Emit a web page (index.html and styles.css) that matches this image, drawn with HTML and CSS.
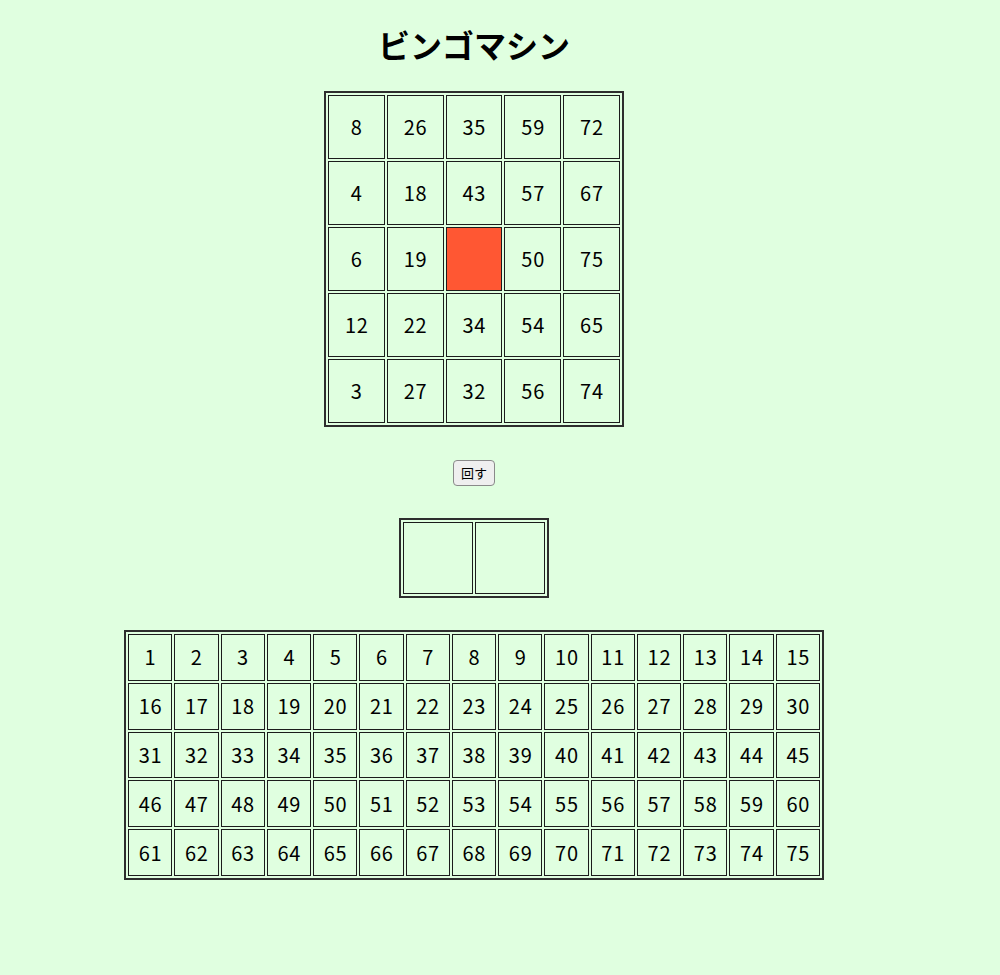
FILE: index.html
```html
<!DOCTYPE html>
<html lang="ja">
<head>
<meta charset="utf-8">
<title>ビンゴマシン</title>
<link rel="stylesheet" href="styles.css">
</head>
<body>
<div class="page">
  <h1 class="title">ビンゴマシン</h1>
  <table class="grid card">
    <tr><td>8</td><td>26</td><td>35</td><td>59</td><td>72</td></tr>
    <tr><td>4</td><td>18</td><td>43</td><td>57</td><td>67</td></tr>
    <tr><td>6</td><td>19</td><td class="hit"></td><td>50</td><td>75</td></tr>
    <tr><td>12</td><td>22</td><td>34</td><td>54</td><td>65</td></tr>
    <tr><td>3</td><td>27</td><td>32</td><td>56</td><td>74</td></tr>
  </table>
  <div class="controls"><button class="spin" type="button">回す</button></div>
  <table class="grid result">
    <tr><td></td><td></td></tr>
  </table>
  <table class="grid board">
    <tr><td>1</td><td>2</td><td>3</td><td>4</td><td>5</td><td>6</td><td>7</td><td>8</td><td>9</td><td>10</td><td>11</td><td>12</td><td>13</td><td>14</td><td>15</td></tr>
    <tr><td>16</td><td>17</td><td>18</td><td>19</td><td>20</td><td>21</td><td>22</td><td>23</td><td>24</td><td>25</td><td>26</td><td>27</td><td>28</td><td>29</td><td>30</td></tr>
    <tr><td>31</td><td>32</td><td>33</td><td>34</td><td>35</td><td>36</td><td>37</td><td>38</td><td>39</td><td>40</td><td>41</td><td>42</td><td>43</td><td>44</td><td>45</td></tr>
    <tr><td>46</td><td>47</td><td>48</td><td>49</td><td>50</td><td>51</td><td>52</td><td>53</td><td>54</td><td>55</td><td>56</td><td>57</td><td>58</td><td>59</td><td>60</td></tr>
    <tr><td>61</td><td>62</td><td>63</td><td>64</td><td>65</td><td>66</td><td>67</td><td>68</td><td>69</td><td>70</td><td>71</td><td>72</td><td>73</td><td>74</td><td>75</td></tr>
  </table>
</div>
</body>
</html>
```

FILE: styles.css
```css
html, body {
  margin: 0;
  padding: 0;
  background: #e0ffe0;
  color: #000;
  font-family: "Noto Sans CJK JP", "Noto Sans", sans-serif;
}
body {
  min-height: 975px;
}
.page {
  width: 948px;
  text-align: center;
  padding-top: 24px;
}
.title {
  margin: 0;
  font-size: 32px;
  line-height: 40px;
  font-weight: bold;
}
.grid {
  margin: 0 auto;
  border: 2px solid #2e2e2e;
  border-collapse: separate;
  border-spacing: 2px;
  table-layout: fixed;
}
.grid td {
  box-sizing: border-box;
  border: 1px solid #1c1c1c;
  padding: 0 0 0 0.75px;
  text-align: center;
  vertical-align: middle;
  font-size: 20px;
  line-height: 24px;
  letter-spacing: 0.75px;
}
.card {
  width: 300px;
  margin-top: 27px;
}
.card td {
  height: 64px;
}
.card td.hit {
  background: #ff5733;
}
.controls {
  margin-top: 32px;
  height: 26px;
}
.spin {
  box-sizing: border-box;
  height: 26px;
  width: 42px;
  padding: 0 6px;
  font-family: "Noto Sans CJK JP", sans-serif;
  font-size: 13px;
  color: #000;
  background: #efefef;
  border: 1px solid #8a8a8a;
  border-radius: 4px;
}
.result {
  width: 150px;
  margin-top: 33px;
}
.result td {
  height: 72px;
}
.board {
  width: 700px;
  margin-top: 32px;
}
.board td {
  height: 46.8px;
}
```
